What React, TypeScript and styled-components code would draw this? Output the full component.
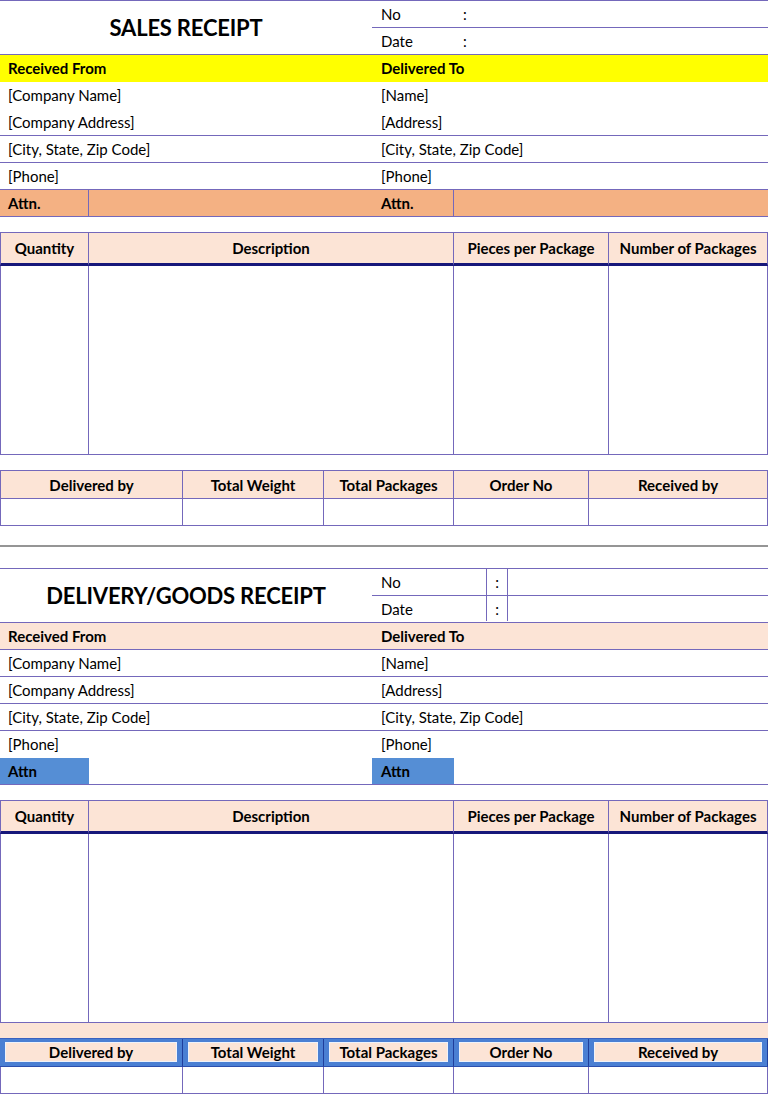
import React, { Fragment } from 'react'
import styled, { createGlobalStyle } from 'styled-components'

const LINE = '#7468bb'
const NAVY = '#17177a'
const PEACH = '#fce4d6'
const ORANGE = '#f4b183'
const YELLOW = '#ffff00'
const BLUE = '#558ed5'
const FRAME = '#4a7fd3'

type Tone = 'plain' | 'yellow' | 'peach'

const toneColor: Record<Tone, string> = {
  plain: '#ffffff',
  yellow: YELLOW,
  peach: PEACH
}

const GlobalStyle = createGlobalStyle`
  html, body {
    margin: 0;
    padding: 0;
    background: #fff;
  }
  body {
    font-family: Lato, 'Liberation Sans', sans-serif;
    font-size: 15px;
    color: #000;
  }
  * {
    box-sizing: border-box;
  }
`

const Page = styled.main`
  width: 768px;
  overflow: hidden;
`

const Header = styled.header`
  display: grid;
  grid-template-columns: 372px 1fr;
  border-top: 1px solid ${LINE};
  border-bottom: 1px solid ${LINE};
`
const Title = styled.h1<{ $size: number }>`
  margin: 0;
  display: flex;
  align-items: center;
  justify-content: center;
  font-size: ${(p) => p.$size}px;
  font-weight: 700;
  letter-spacing: -0.2px;
`
const Meta = styled.div`
  display: grid;
  grid-template-rows: 27px 26px;
`
const MetaRow = styled.div<{ $boxed: boolean; $ruled: boolean }>`
  display: grid;
  grid-template-columns: ${(p) => (p.$boxed ? '115px 21px 1fr' : '91px 20px 1fr')};
  align-items: stretch;
  border-bottom: 1px solid ${(p) => (p.$ruled ? LINE : 'transparent')};
`
const MetaLabel = styled.span<{ $boxed: boolean }>`
  display: flex;
  align-items: center;
  padding-left: 9px;
  border-right: 1px solid ${(p) => (p.$boxed ? LINE : 'transparent')};
`
const MetaColon = styled.span<{ $boxed: boolean }>`
  display: flex;
  align-items: center;
  justify-content: ${(p) => (p.$boxed ? 'center' : 'flex-start')};
  border-right: 1px solid ${(p) => (p.$boxed ? LINE : 'transparent')};
`

const AddressRow = styled.div<{ $tone: Tone; $ruled: boolean; $bold?: boolean }>`
  display: grid;
  grid-template-columns: 372px 1fr;
  height: 27px;
  background: ${(p) => toneColor[p.$tone]};
  font-weight: ${(p) => (p.$bold ? 700 : 400)};
  border-bottom: 1px solid ${(p) => (p.$ruled ? LINE : 'transparent')};
`
const AddressCell = styled.span<{ $right?: boolean }>`
  display: flex;
  align-items: center;
  padding-left: ${(p) => (p.$right ? 9 : 8)}px;
`

const AttnRow = styled.div<{ $variant: 'orange' | 'blue' }>`
  display: grid;
  grid-template-columns: 89px 283px 82px 1fr;
  height: 27px;
  font-weight: 700;
  background: ${(p) => (p.$variant === 'orange' ? ORANGE : '#fff')};
  border-bottom: 1px solid ${LINE};
`
const AttnLabel = styled.span<{ $variant: 'orange' | 'blue'; $right?: boolean }>`
  display: flex;
  align-items: center;
  padding-left: ${(p) => (p.$right ? 9 : 8)}px;
  background: ${(p) => (p.$variant === 'blue' ? BLUE : 'transparent')};
  border-right: 1px solid ${(p) => (p.$variant === 'orange' ? LINE : BLUE)};
`
const AttnValue = styled.span``

const ItemsTable = styled.div`
  margin-top: 15px;
  display: grid;
  grid-template-columns: 89px 365px 155px 1fr;
  grid-template-rows: 33px 189px;
  border-top: 1px solid ${LINE};
`
const HeadCell = styled.div`
  display: flex;
  align-items: center;
  justify-content: center;
  background: ${PEACH};
  font-weight: 700;
  white-space: nowrap;
  border-right: 1px solid ${LINE};
  border-bottom: 3px solid ${NAVY};
  &:first-child {
    border-left: 1px solid ${LINE};
  }
`
const BodyCell = styled.div<{ $first?: boolean }>`
  border-right: 1px solid ${LINE};
  border-bottom: 1px solid ${LINE};
  border-left: ${(p) => (p.$first ? `1px solid ${LINE}` : 'none')};
`

const SummaryTable = styled.div<{ $framed: boolean }>`
  margin-top: ${(p) => (p.$framed ? 0 : 15)}px;
  display: grid;
  grid-template-columns: 183px 141px 130px 135px 1fr;
  grid-template-rows: 28px 27px;
  border-top: 1px solid ${(p) => (p.$framed ? '#3a62bf' : LINE)};
`
const SummaryHead = styled.div<{ $first?: boolean }>`
  display: flex;
  align-items: center;
  justify-content: center;
  background: ${PEACH};
  font-weight: 700;
  white-space: nowrap;
  border-right: 1px solid ${LINE};
  border-bottom: 1px solid ${LINE};
  border-left: ${(p) => (p.$first ? `1px solid ${LINE}` : 'none')};
`
const FramedHead = styled.div`
  display: flex;
  padding: 3px 5px 4px;
  background: ${FRAME};
  border-right: 1px solid #1f3e9c;
  border-bottom: 1px solid #2c4fae;
`
const FramedLabel = styled.span`
  flex: 1;
  display: flex;
  align-items: center;
  justify-content: center;
  background: ${PEACH};
  border: 1px solid #eef2fa;
  font-weight: 700;
  white-space: nowrap;
`

const PeachBand = styled.div`
  height: 15px;
  background: ${PEACH};
`

const Divider = styled.hr`
  margin: 19px 0 21px;
  border: none;
  height: 2px;
  background: #959595;
`

const itemHeads = ['Quantity', 'Description', 'Pieces per Package', 'Number of Packages']
const summaryHeads = ['Delivered by', 'Total Weight', 'Total Packages', 'Order No', 'Received by']

interface ReceiptProps {
  title: string
  titleSize: number
  variant: 'sales' | 'delivery'
}

const Receipt: React.FC<ReceiptProps> = ({ title, titleSize, variant }) => {
  const boxed = variant === 'delivery'
  const sales = variant === 'sales'
  const attn = sales ? 'orange' : 'blue'
  const label = sales ? 'Attn.' : 'Attn'

  const rows = [
    { left: '[Company Name]', right: '[Name]', ruled: !sales },
    { left: '[Company Address]', right: '[Address]', ruled: true },
    { left: '[City, State, Zip Code]', right: '[City, State, Zip Code]', ruled: true },
    { left: '[Phone]', right: '[Phone]', ruled: sales }
  ]

  return (
    <section>
      <Header>
        <Title $size={titleSize}>{title}</Title>
        <Meta>
          {['No', 'Date'].map((name, index) => (
            <MetaRow key={name} $boxed={boxed} $ruled={index === 0}>
              <MetaLabel $boxed={boxed}>{name}</MetaLabel>
              <MetaColon $boxed={boxed}>:</MetaColon>
              <span />
            </MetaRow>
          ))}
        </Meta>
      </Header>

      <AddressRow $tone={sales ? 'yellow' : 'peach'} $ruled={!sales} $bold>
        <AddressCell>Received From</AddressCell>
        <AddressCell $right>Delivered To</AddressCell>
      </AddressRow>
      {rows.map((row) => (
        <AddressRow key={row.left} $tone="plain" $ruled={row.ruled}>
          <AddressCell>{row.left}</AddressCell>
          <AddressCell $right>{row.right}</AddressCell>
        </AddressRow>
      ))}
      <AttnRow $variant={attn}>
        <AttnLabel $variant={attn}>{label}</AttnLabel>
        <AttnValue />
        <AttnLabel $variant={attn} $right>
          {label}
        </AttnLabel>
        <AttnValue />
      </AttnRow>

      <ItemsTable>
        {itemHeads.map((head) => (
          <HeadCell key={head}>{head}</HeadCell>
        ))}
        {itemHeads.map((head, index) => (
          <BodyCell key={head} $first={index === 0} />
        ))}
      </ItemsTable>

      {!sales && <PeachBand />}
      <SummaryTable $framed={!sales}>
        {summaryHeads.map((head, index) =>
          sales ? (
            <SummaryHead key={head} $first={index === 0}>
              {head}
            </SummaryHead>
          ) : (
            <FramedHead key={head}>
              <FramedLabel>{head}</FramedLabel>
            </FramedHead>
          )
        )}
        {summaryHeads.map((head, index) => (
          <BodyCell key={head} $first={index === 0} />
        ))}
      </SummaryTable>
    </section>
  )
}

export default function App() {
  return (
    <Fragment>
      <GlobalStyle />
      <Page>
        <Receipt title="SALES RECEIPT" titleSize={22} variant="sales" />
        <Divider />
        <Receipt title="DELIVERY/GOODS RECEIPT" titleSize={22} variant="delivery" />
      </Page>
    </Fragment>
  )
}
